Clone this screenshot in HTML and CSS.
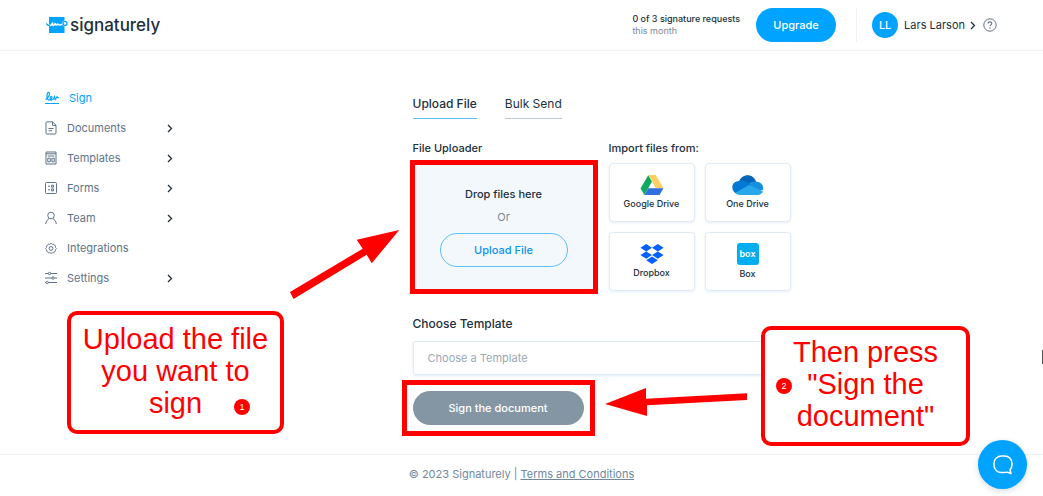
FILE: index.html
```html
<!DOCTYPE html>
<html lang="en">
<head>
  <meta charset="UTF-8" />
  <meta name="viewport" content="width=device-width, initial-scale=1.0" />
  <title>Signaturely</title>
  <link rel="stylesheet" href="styles.css">
</head>
<body>
  <header class="topbar">
    <a class="logo" href="#">
      <svg width="22" height="18" viewBox="0 0 22 18" fill="none">
        <path d="M3 1h15.500v16H3z" fill="#00a3ff"/>
        <path d="M3 9.200c1.800.8 2.900-.5 3.700-2.700-.4 2.400 0 3.500 1.100 2.800.8-.5 1.200-1.400 1.500-2.200-.2 1.400.2 2.300 1.200 1.900.7-.3 1-.8 1.300-1.500.2 2 2.200 2 4.400.6" stroke="#fff" stroke-width="1.500" stroke-linecap="round"/>
        <circle cx="19" cy="7.400" r="3" fill="#fff"/>
        <circle cx="19" cy="7.400" r="2" stroke="#00a3ff" stroke-width="1.300"/>
        <path d="M.7 8c.5 1 1.200 1.500 2.500 1.500" stroke="#00a3ff" stroke-width="1.400" stroke-linecap="round"/>
      </svg>
      <span>signaturely</span>
    </a>
    <div class="quota">
      <strong>0 of 3 signature requests</strong>
      <span>this month</span>
    </div>
    <button class="btn upgrade">Upgrade</button>
    <div class="account">
      <span class="avatar">LL</span>
      <button class="account-name">Lars Larson
        <svg class="chevron" width="6" height="9" viewBox="0 0 6 9"><path d="M1 1l3.500 3.500L1 8"/></svg>
      </button>
      <a class="help" href="#" aria-label="Help">
        <svg width="14" height="14" viewBox="0 0 14 14" fill="none" stroke="#5e7388">
          <circle cx="7" cy="7" r="6.200"/>
          <path d="M5.200 5.600c0-2.400 3.600-2.300 3.600-.1C8.800 6.900 7 6.900 7 8.300M7 9.600v1.100" stroke-width="1.100"/>
        </svg>
      </a>
    </div>
  </header>

  <div class="shell">
    <nav class="sidebar">
      <a class="nav-item active" href="#">
        <svg width="14" height="14" viewBox="0 0 14 14">
          <path d="M.5 8.500C3 7.500 5.300 3.500 4.200 1.600 3.300.4 1.900 2.500 2 5.200c.1 2.600 1 4 2.300 3.900C5.800 9 7.600 6.600 6.800 5.600c-.8-.8-2 1-1.500 2.600.6 1.400 2.400.9 3.200-.5l.9-1.900c.2 1.200.3 2.200.8 2.900.8-.3 1.200-2.500 1.900-3 .5.400.2 1.200 1.700 1M0 12.500h14" stroke-width="1.200"/>
        </svg>
        <span>Sign</span>
      </a>
      <a class="nav-item" href="#">
        <svg width="12" height="14" viewBox="0 0 12 14">
          <path d="M2 .8h5.500L11 4.200V12a1 1 0 0 1-1 1H2a1 1 0 0 1-1-1V1.800a1 1 0 0 1 1-1zM7.500 1v3.400H11M3.500 7.500h5M3.500 9.700h3.500"/>
        </svg>
        <span>Documents</span>
        <svg class="chevron" width="6" height="9" viewBox="0 0 6 9"><path d="M1 1l3.500 3.500L1 8"/></svg>
      </a>
      <a class="nav-item" href="#">
        <svg width="12" height="14" viewBox="0 0 12 14">
          <path d="M1 1h10v12H1zM1 2.800h10M2.700 5h6.600M2.800 7.200h2.500v3.600H2.800zM6.900 7.200h2.400v3.600H6.900z"/>
        </svg>
        <span>Templates</span>
        <svg class="chevron" width="6" height="9" viewBox="0 0 6 9"><path d="M1 1l3.500 3.500L1 8"/></svg>
      </a>
      <a class="nav-item" href="#">
        <svg width="12" height="14" viewBox="0 0 12 14">
          <path d="M1.500 1.500h9a1 1 0 0 1 1 1v9a1 1 0 0 1-1 1h-9a1 1 0 0 1-1-1v-9a1 1 0 0 1 1-1zM3 5.200h2M3 8.800h2M6.500 4.200h2v2h-2zM6.500 7.900h2v2h-2z"/>
        </svg>
        <span>Forms</span>
        <svg class="chevron" width="6" height="9" viewBox="0 0 6 9"><path d="M1 1l3.500 3.500L1 8"/></svg>
      </a>
      <a class="nav-item" href="#">
        <svg width="12" height="14" viewBox="0 0 12 14">
          <circle cx="6" cy="4.500" r="3.300"/>
          <path d="M.7 13c.2-3 2-4.800 3.700-5.300M11.300 13c-.2-3-2-4.800-3.700-5.300"/>
        </svg>
        <span>Team</span>
        <svg class="chevron" width="6" height="9" viewBox="0 0 6 9"><path d="M1 1l3.500 3.500L1 8"/></svg>
      </a>
      <a class="nav-item" href="#">
        <svg width="12" height="14" viewBox="0 0 12 14">
          <path d="M6 1.800l1.300 1.100 1.700-.3.600 1.500 1.600.7-.3 1.600L12 7.500l-1.100 1.200.3 1.600-1.600.6-.6 1.600-1.700-.3L6 13.200l-1.300-1-1.700.3-.6-1.600-1.600-.6.300-1.600L0 7.500l1.100-1.100-.3-1.600 1.600-.7L3 2.600l1.700.3z" transform="translate(.6 .7) scale(.9)"/>
          <circle cx="6" cy="7.400" r="1.900"/>
        </svg>
        <span>Integrations</span>
      </a>
      <a class="nav-item" href="#">
        <svg width="12" height="14" viewBox="0 0 12 14">
          <path d="M0 2.500h3.300M5.700 2.500H12M0 7h6.800M9.200 7H12M0 11.500h1M3.400 11.500H12"/>
          <circle cx="4.500" cy="2.500" r="1.200"/>
          <circle cx="8" cy="7" r="1.200"/>
          <circle cx="2.200" cy="11.500" r="1.200"/>
        </svg>
        <span>Settings</span>
        <svg class="chevron" width="6" height="9" viewBox="0 0 6 9"><path d="M1 1l3.500 3.500L1 8"/></svg>
      </a>
    </nav>

    <main class="content">
      <div class="tabs">
        <button class="tab active">Upload File</button>
        <button class="tab">Bulk Send</button>
      </div>

      <div class="sources">
        <section>
          <h2 class="label">File Uploader</h2>
          <div class="dropzone">
            <p class="drop-title">Drop files here</p>
            <p class="drop-or">Or</p>
            <button class="btn outline">Upload File</button>
          </div>
        </section>
        <section>
          <h2 class="label">Import files from:</h2>
          <div class="imports">
            <button class="import-card">
              <svg width="24" height="20" viewBox="0 0 24 20">
                <path d="M8.300 0L.5 13.500 4.500 20 12 6.600z" fill="#11a861"/>
                <path d="M8.300 0h7.500l7.700 13.300h-7.700z" fill="#ffcf63"/>
                <path d="M4.500 20l3.800-6.700h15.200L19.500 20z" fill="#2f6fde"/>
              </svg>
              Google Drive
            </button>
            <button class="import-card">
              <svg width="32" height="20" viewBox="0 0 32 20">
                <path d="M7 6.500C10-1.500 21-2 24 6.500l-6 6z" fill="#0364b8"/>
                <path d="M7 6c4-1 7 0 10 2.500L20 11 4 18.500C-1.500 15-1 6.500 7 6z" fill="#0078d4"/>
                <path d="M23.500 6.500C29 6.500 32 10.500 31 15l-5 1-9.500-7c2-2 4.500-2.700 7-2.500z" fill="#1490df"/>
                <path d="M3.500 17.800L17 10l14 6.500c-1 2.200-3 3.500-5 3.500H8c-1.800 0-3.300-.8-4.500-2.200z" fill="#28a8ea"/>
              </svg>
              One Drive
            </button>
            <button class="import-card">
              <svg width="24" height="20" viewBox="0 0 24 20" fill="#0061ff">
                <path d="M6.200 0L12 3.700 6.200 7.400.4 3.700zM17.800 0l5.800 3.700-5.800 3.700L12 3.700zM6.200 7.400l5.800 3.700-5.800 3.700-5.800-3.700zM17.800 7.400l5.800 3.700-5.800 3.700-5.800-3.700zM12 12.600l5.800 3.700L12 20l-5.800-3.700z"/>
              </svg>
              Dropbox
            </button>
            <button class="import-card">
              <span class="box-logo" aria-hidden="true">box</span>
              Box
            </button>
          </div>
        </section>
      </div>

      <label class="template-label" for="template">Choose Template</label>
      <input class="template-input" id="template" type="text" placeholder="Choose a Template" />
      <div class="submit">
        <button class="btn sign">Sign the document</button>
      </div>
    </main>
  </div>

  <footer class="footer">© 2023 Signaturely | <a href="#">Terms and Conditions</a></footer>

  <svg class="arrow arrow-upload" width="110" height="70" viewBox="0 0 110 70">
    <path d="M0 62L72.700 18.700 66.700 9.700 109.300 0 81.700 33.300 76.700 24.700 3.500 69z"/>
  </svg>
  <svg class="arrow arrow-sign" width="142" height="28" viewBox="0 0 142 28">
    <path d="M0 16L41 0V10.700L142 5.300V12L42 17.300V28z"/>
  </svg>
  <div class="callout callout-upload">
    <p>Upload the file you want to</p>
    <p class="last-line">sign</p>
    <span class="step">1</span>
  </div>
  <div class="callout callout-sign">
    <p>Then press "Sign the document"</p>
    <span class="step">2</span>
  </div>
  <span class="edge-mark"></span>

  <button class="chat" aria-label="Open chat">
    <svg width="22" height="20" viewBox="0 0 22 20" fill="none" stroke="#fff" stroke-width="1.500" stroke-linejoin="round">
      <path d="M18 15c1.300-1.500 2-3.300 2-5.500V8.500C20 4 16.500 1 12.500 1h-3C5.500 1 2 4 2 8.500v1.500c0 4.500 3.500 7.500 7.500 7.500h3c1 0 1.800-.1 2.600-.4L19 18.500z"/>
    </svg>
  </button>
</body>
</html>
```
FILE: styles.css
```css
* {
  margin: 0;
  padding: 0;
  box-sizing: border-box;
}
body {
  position: relative;
  display: flex;
  flex-direction: column;
  min-height: 100vh;
  font-family: Inter, "Liberation Sans", sans-serif;
  font-size: 11px;
  line-height: 14px;
  color: #20303c;
  background: #fff;
}
button,
input {
  font: inherit;
  color: inherit;
  background: none;
  border: 0;
}
button {
  cursor: pointer;
}
a {
  color: inherit;
  text-decoration: none;
}
.topbar {
  display: flex;
  align-items: center;
  height: 51px;
  padding: 0 46px;
  border-bottom: 1px solid #f0f2f4;
}
.logo {
  display: flex;
  align-items: center;
  gap: 2px;
  margin-right: auto;
  font-size: 17px;
  line-height: 24px;
  font-weight: 500;
}
.quota {
  display: flex;
  flex-direction: column;
  font-size: 9px;
  line-height: 12px;
}
.quota strong {
  font-weight: 500;
}
.quota span {
  color: #7b8794;
}
.btn {
  height: 34px;
  border-radius: 17px;
  color: #fff;
  font-weight: 500;
}
.upgrade {
  width: 80px;
  margin: 0 20px 0 16px;
  background: #00a3ff;
}
.account {
  display: flex;
  align-items: center;
  gap: 6px;
  height: 34px;
  padding-left: 15px;
  border-left: 1px solid #f0f2f4;
}
.avatar {
  width: 26px;
  height: 26px;
  border-radius: 50%;
  background: #00a3ff;
  color: #fff;
  line-height: 26px;
  font-weight: 500;
  text-align: center;
}
.account-name {
  display: flex;
  align-items: center;
  gap: 5px;
}
.help {
  display: flex;
  margin-left: 1px;
}
.chevron {
  fill: none;
  stroke: #20303c;
  stroke-width: 1.300;
}
.shell {
  flex: 1;
  display: flex;
  padding: 32px 13px 28px 45px;
}
.sidebar {
  width: 128px;
}
.nav-item {
  display: flex;
  align-items: center;
  gap: 10px;
  height: 30px;
  color: #5e7388;
}
.nav-item svg {
  fill: none;
  stroke: currentColor;
}
.nav-item .chevron {
  margin-left: auto;
  stroke: #20303c;
}
.nav-item.active {
  color: #00a3ff;
}
.content {
  flex: 1;
  max-width: 378px;
  margin: 12px auto 0;
}
.tabs {
  display: flex;
  gap: 28px;
}
.tab {
  height: 24px;
  padding-bottom: 6px;
  border-bottom: 1px solid #c0c8cf;
  font-size: 12px;
}
.tab.active {
  border-color: #5cc0fb;
  font-weight: 500;
}
.sources {
  display: grid;
  grid-template-columns: 1fr 1fr;
  gap: 14px;
  margin-top: 22px;
}
.label {
  margin-bottom: 8px;
  font-size: 11px;
  font-weight: 500;
}
.dropzone {
  position: relative;
  display: flex;
  flex-direction: column;
  align-items: center;
  gap: 9px;
  height: 128px;
  padding-top: 24px;
  background: #f3f8fc;
}
.dropzone::after,
.submit::after {
  content: '';
  position: absolute;
  border: 5px solid #f00;
  pointer-events: none;
}
.dropzone::after {
  inset: -3px;
}
.drop-title {
  font-weight: 500;
}
.drop-or {
  color: #7b8794;
}
.outline {
  width: 128px;
  border: 1px solid #5cc0fb;
  color: #0a94f0;
}
.imports {
  display: grid;
  grid-template-columns: 1fr 1fr;
  gap: 10px;
}
.import-card {
  display: flex;
  flex-direction: column;
  align-items: center;
  justify-content: center;
  gap: 2px;
  height: 59px;
  border: 1px solid #dfeaf4;
  border-radius: 4px;
  box-shadow: 0 1px 3px #e6eff7;
  font-size: 9px;
  font-weight: 500;
}
.box-logo {
  width: 22px;
  height: 22px;
  border-radius: 3px;
  background: #00aeef;
  color: #fff;
  font-size: 9px;
  line-height: 22px;
  font-weight: 600;
}
.template-label {
  display: block;
  margin: 26px 0 10px;
  font-size: 12px;
  font-weight: 500;
}
.template-input {
  display: block;
  width: 100%;
  height: 34px;
  padding: 0 14px;
  border: 1px solid #dfeaf4;
  border-radius: 3px;
  box-shadow: 0 1px 3px #e1ebf6;
}
.template-input::placeholder {
  color: #9aa8b5;
}
.submit {
  position: relative;
  width: fit-content;
  margin-top: 16px;
}
.submit::after {
  inset: -11px;
}
.sign {
  display: block;
  width: 171px;
  background: #8496a4;
}
.footer {
  padding: 12px 0 15px;
  border-top: 1px solid #f0f2f4;
  color: #7188a0;
  text-align: center;
}
.footer a {
  text-decoration: underline;
}
.arrow {
  position: absolute;
  fill: #f00;
}
.arrow-upload {
  left: 290px;
  top: 230px;
}
.arrow-sign {
  left: 605px;
  top: 388px;
}
.callout {
  position: absolute;
  padding: 8px;
  border: 4px solid #f00;
  border-radius: 10px;
  background: #fff;
  color: #f00;
  font-family: "Liberation Sans", Arial, sans-serif;
  font-size: 29px;
  line-height: 32px;
  text-align: center;
}
.callout-upload {
  left: 67px;
  top: 311px;
  width: 217px;
  height: 123px;
}
.callout-sign {
  left: 761px;
  top: 326px;
  width: 209px;
  height: 120px;
  padding: 6px 20px;
}
.last-line {
  width: fit-content;
  margin: 0 auto;
}
.step {
  position: absolute;
  width: 16px;
  height: 16px;
  border-radius: 50%;
  background: #f00;
  color: #fff;
  font-size: 9px;
  line-height: 16px;
}
.callout-upload .step {
  right: 30px;
  bottom: 15px;
}
.callout-sign .step {
  left: 11px;
  top: 48px;
}
.edge-mark {
  position: absolute;
  right: 0;
  top: 350px;
  width: 1px;
  height: 14px;
  background: #555;
}
.chat {
  position: fixed;
  right: 16px;
  bottom: 7px;
  display: flex;
  align-items: center;
  justify-content: center;
  width: 49px;
  height: 49px;
  border-radius: 50%;
  background: #00a3ff;
  box-shadow: 0 2px 6px #d5dbe0;
}
```
